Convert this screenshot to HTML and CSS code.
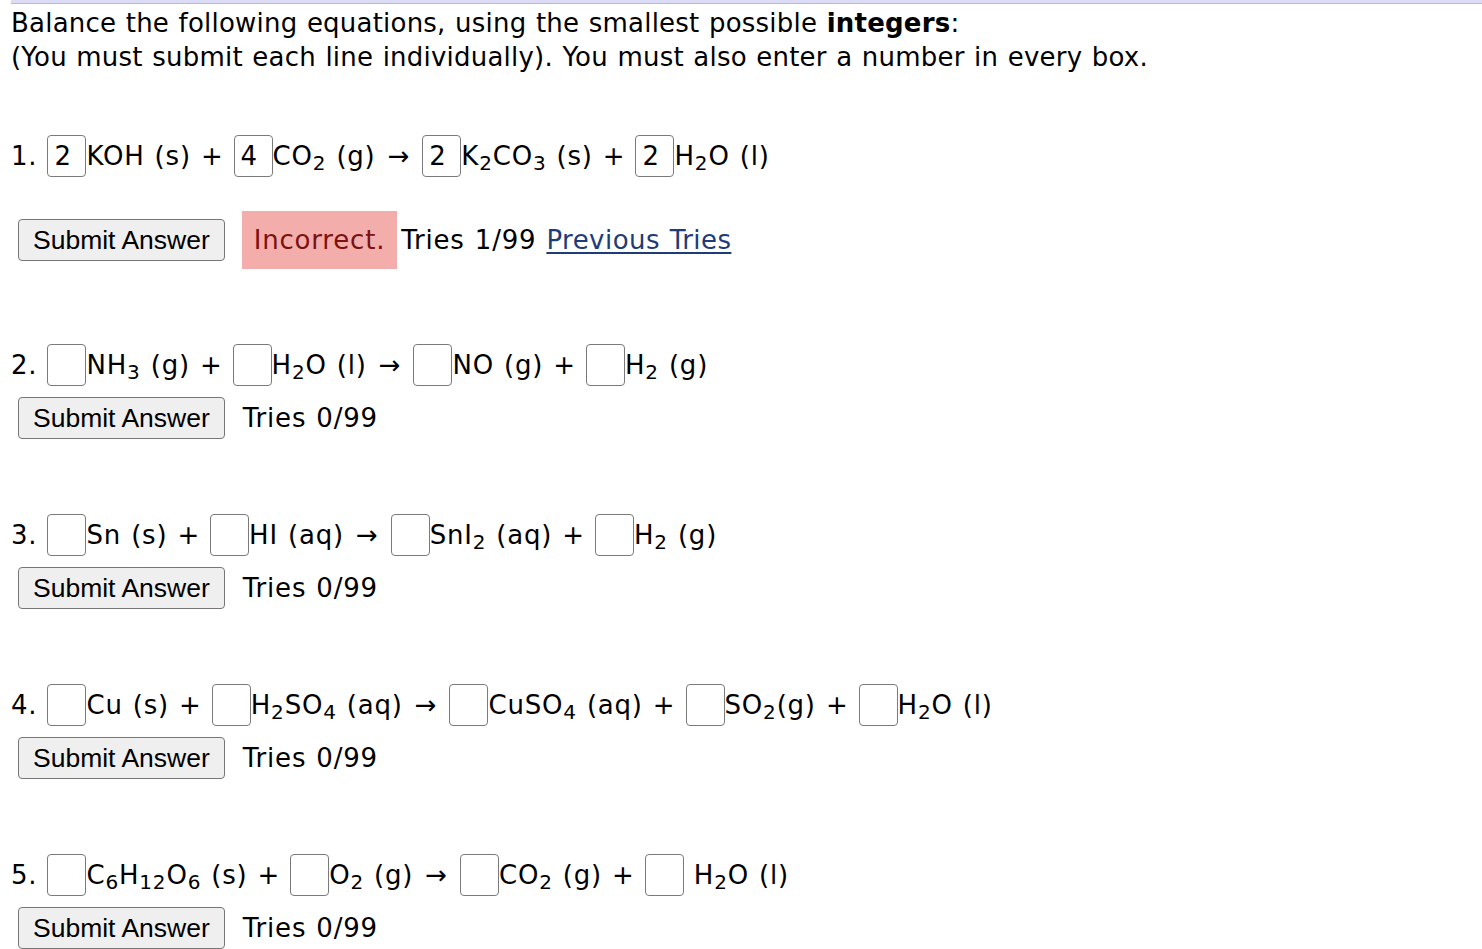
FILE: index.html
```html
<!DOCTYPE html>
<html>
<head>
<meta charset="utf-8">
<link rel="stylesheet" href="styles.css">
</head>
<body>
<div class="page">
  <div class="topbar"></div>
  <div class="intro">Balance the following equations, using the smallest possible <b>integers</b>:<br>(You must submit each line individually). You must also enter a number in every box.</div>

  <div class="problem first">
    <div class="eq">1. <input class="coef" value="2">KOH (s) + <input class="coef" value="4">CO<sub>2</sub> (g) <span class="arrow">→</span> <input class="coef" value="2">K<sub>2</sub>CO<sub>3</sub> (s) + <input class="coef" value="2">H<sub>2</sub>O (l)</div>
    <div class="actions tall">
      <button class="submit">Submit Answer</button>
      <span class="feedback">Incorrect.</span>
      <span class="tries">Tries 1/99 <a href="#" class="prev">Previous Tries</a></span>
    </div>
  </div>

  <div class="problem">
    <div class="eq">2. <input class="coef">NH<sub>3</sub> (g) + <input class="coef">H<sub>2</sub>O (l) <span class="arrow">→</span> <input class="coef">NO (g) + <input class="coef">H<sub>2</sub> (g)</div>
    <div class="actions">
      <button class="submit">Submit Answer</button>
      <span class="tries plain">Tries 0/99</span>
    </div>
  </div>

  <div class="problem">
    <div class="eq">3. <input class="coef">Sn (s) + <input class="coef">HI (aq) <span class="arrow">→</span> <input class="coef">SnI<sub>2</sub> (aq) + <input class="coef">H<sub>2</sub> (g)</div>
    <div class="actions">
      <button class="submit">Submit Answer</button>
      <span class="tries plain">Tries 0/99</span>
    </div>
  </div>

  <div class="problem">
    <div class="eq">4. <input class="coef">Cu (s) + <input class="coef">H<sub>2</sub>SO<sub>4</sub> (aq) <span class="arrow">→</span> <input class="coef">CuSO<sub>4</sub> (aq) + <input class="coef">SO<sub>2</sub>(g) + <input class="coef">H<sub>2</sub>O (l)</div>
    <div class="actions">
      <button class="submit">Submit Answer</button>
      <span class="tries plain">Tries 0/99</span>
    </div>
  </div>

  <div class="problem">
    <div class="eq">5. <input class="coef">C<sub>6</sub>H<sub>12</sub>O<sub>6</sub> (s) + <input class="coef">O<sub>2</sub> (g) <span class="arrow">→</span> <input class="coef">CO<sub>2</sub> (g) + <input class="coef"> H<sub>2</sub>O (l)</div>
    <div class="actions">
      <button class="submit">Submit Answer</button>
      <span class="tries plain">Tries 0/99</span>
    </div>
  </div>
</div>
</body>
</html>
```

FILE: styles.css
```css
html, body {
  margin: 0;
  padding: 0;
  background: #ffffff;
}
body {
  font-family: "DejaVu Sans", Verdana, sans-serif;
  color: #000;
  overflow: hidden;
}
.page {
  padding-left: 11px;
}
.topbar {
  height: 3px;
  background: #dcdcf6;
  border-bottom: 1px solid #bcbcbc;
}
.intro {
  margin-top: 2px;
  font-size: 26px;
  line-height: 34px;
  letter-spacing: 0.22px;
  word-spacing: 1px;
  white-space: nowrap;
}
.intro b {
  font-weight: bold;
}
.problem {
  margin-top: 75px;
}
.problem.first {
  margin-top: 61px;
}
.eq {
  font-size: 26px;
  line-height: 34px;
  letter-spacing: 0.8px;
  word-spacing: 1px;
  white-space: nowrap;
}
.eq sub {
  font-size: 20px;
  line-height: 0;
  vertical-align: -5px;
}
.arrow {
  padding: 0 2px;
}
.coef {
  width: 39px;
  height: 42px;
  box-sizing: border-box;
  border: 1.5px solid #7a7a7a;
  border-radius: 4px;
  padding: 0 6px;
  margin: 0;
  font-family: "DejaVu Sans", Verdana, sans-serif;
  font-size: 26px;
  letter-spacing: 0;
  color: #000;
  background: #fff;
}
.actions {
  display: flex;
  align-items: center;
  margin-top: 11px;
  font-size: 26px;
  line-height: 34px;
  letter-spacing: 0.8px;
  word-spacing: 1px;
}
.actions.tall {
  margin-top: 34px;
}
.submit {
  height: 42px;
  margin-left: 7px;
  padding: 0 14px;
  border: 1px solid #767676;
  border-radius: 4px;
  background: #efefef;
  font-family: "Liberation Sans", Arial, sans-serif;
  font-size: 26.5px;
  letter-spacing: 0;
  word-spacing: 0;
  color: #000;
}
.feedback {
  margin-left: 17px;
  padding: 12px 12px;
  background: #f3adab;
  color: #7b1111;
}
.tries {
  margin-left: 4px;
  white-space: pre;
}
.tries.plain {
  margin-left: 18px;
}
.prev {
  color: #1d3c78;
  letter-spacing: 0.45px;
  text-decoration: underline;
  text-underline-offset: 3px;
}
```
